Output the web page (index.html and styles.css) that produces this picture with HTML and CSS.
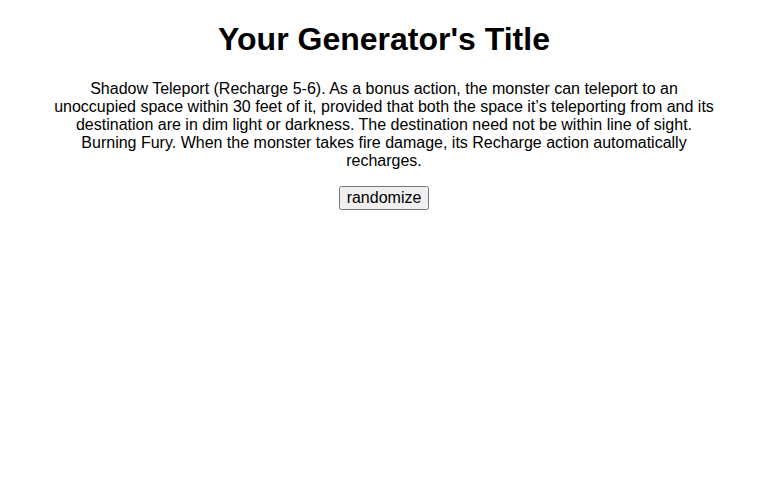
FILE: index.html
```html
<!DOCTYPE html>
<html>
<head>
<meta charset="utf-8">
<link rel="stylesheet" href="styles.css">
</head>
<body>
<div class="wrap">
<h1 class="title">Your Generator's Title</h1>
<p class="output">Shadow Teleport (Recharge 5-6). As a bonus action, the monster can teleport to an unoccupied space within 30 feet of it, provided that both the space it’s teleporting from and its destination are in dim light or darkness. The destination need not be within line of sight.<br>Burning Fury. When the monster takes fire damage, its Recharge action automatically recharges.</p>
<button class="btn">randomize</button>
</div>
</body>
</html>
```
FILE: styles.css
```css
body {
  margin: 0;
  font-family: "Liberation Sans", Arial, sans-serif;
  background: #fff;
  color: #000;
}
.wrap {
  max-width: 666px;
  margin: 0 auto;
  text-align: center;
}
.title {
  font-size: 32px;
  font-weight: bold;
  margin: 21px 0 22px;
}
.output {
  font-size: 16px;
  line-height: 18px;
  margin: 16px 0;
}
.btn {
  font-family: "Liberation Sans", Arial, sans-serif;
  font-size: 16px;
  padding: 1px 6px;
}
```
